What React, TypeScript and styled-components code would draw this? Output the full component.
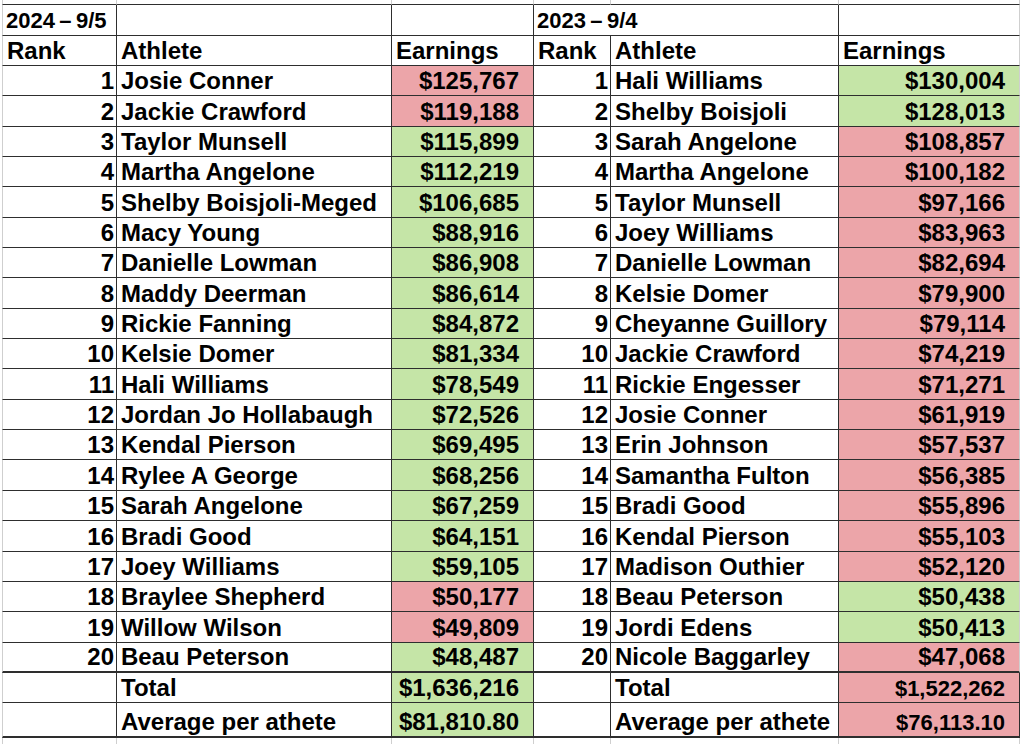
import React from 'react'
import styled, { createGlobalStyle } from 'styled-components'

type Fill = 'red' | 'green' | undefined

interface Entry {
  rank: number
  name: string
  amount: string
  fill: Fill
}

interface Summary {
  label: string
  amount: string
}

const LINE = '#2e2e2e'
const GRID = '#cfcfcf'
const RED = '#eca5a9'
const GREEN = '#c5e5a7'

const GlobalStyle = createGlobalStyle`
  html, body {
    margin: 0;
    padding: 0;
    background: #fff;
  }
  body {
    font-family: "Liberation Sans", Arial, Helvetica, sans-serif;
    font-weight: 700;
    color: #000;
  }
`

const Sheet = styled.div`
  display: grid;
  grid-template-columns: 115px 275px 142px 77px 228px 181px;
  grid-template-rows: 5px 31px 30px repeat(20, 30.35px) 30px 35px 1fr;
  height: 744px;
  padding-left: 2px;
  box-sizing: border-box;
  overflow: hidden;
`

const Cell = styled.div<{ $fill?: Fill; $edge?: boolean; $first?: boolean; $heavy?: boolean }>`
  box-sizing: border-box;
  display: flex;
  align-items: flex-end;
  min-width: 0;
  white-space: nowrap;
  font-size: 24px;
  line-height: normal;
  background: ${({ $fill }) => ($fill === 'red' ? RED : $fill === 'green' ? GREEN : '#fff')};
  border-right: 1px solid ${({ $edge }) => ($edge ? GRID : LINE)};
  border-bottom: ${({ $heavy }) => ($heavy ? 2 : 1)}px solid ${LINE};
  border-left: ${({ $first }) => ($first ? `1px solid ${GRID}` : 'none')};
`

const Gutter = styled.div<{ $first?: boolean; $top?: boolean }>`
  box-sizing: border-box;
  border-right: 1px solid ${GRID};
  border-left: ${({ $first }) => ($first ? `1px solid ${GRID}` : 'none')};
  border-bottom: ${({ $top }) => ($top ? `1px solid ${LINE}` : 'none')};
`

const TitleCell = styled(Cell)<{ $span?: number }>`
  grid-column: span ${({ $span }) => $span ?? 1};
  font-size: 22px;
  word-spacing: -1.7px;
  padding: 0 4px 1px 3px;
`

const HeadCell = styled(Cell)`
  padding: 0 4px 0;
`

const RankCell = styled(Cell)`
  justify-content: flex-end;
  padding-right: 2px;
`

const NameCell = styled(Cell)`
  padding-left: 4px;
`

const MoneyCell = styled(Cell)<{ $small?: boolean }>`
  justify-content: flex-end;
  padding-right: 14px;
  font-size: ${({ $small }) => ($small ? 22 : 24)}px;
`

const left: Entry[] = [
  { rank: 1, name: 'Josie Conner', amount: '$125,767', fill: 'red' },
  { rank: 2, name: 'Jackie Crawford', amount: '$119,188', fill: 'red' },
  { rank: 3, name: 'Taylor Munsell', amount: '$115,899', fill: 'green' },
  { rank: 4, name: 'Martha Angelone', amount: '$112,219', fill: 'green' },
  { rank: 5, name: 'Shelby Boisjoli-Meged', amount: '$106,685', fill: 'green' },
  { rank: 6, name: 'Macy Young', amount: '$88,916', fill: 'green' },
  { rank: 7, name: 'Danielle Lowman', amount: '$86,908', fill: 'green' },
  { rank: 8, name: 'Maddy Deerman', amount: '$86,614', fill: 'green' },
  { rank: 9, name: 'Rickie Fanning', amount: '$84,872', fill: 'green' },
  { rank: 10, name: 'Kelsie Domer', amount: '$81,334', fill: 'green' },
  { rank: 11, name: 'Hali Williams', amount: '$78,549', fill: 'green' },
  { rank: 12, name: 'Jordan Jo Hollabaugh', amount: '$72,526', fill: 'green' },
  { rank: 13, name: 'Kendal Pierson', amount: '$69,495', fill: 'green' },
  { rank: 14, name: 'Rylee A George', amount: '$68,256', fill: 'green' },
  { rank: 15, name: 'Sarah Angelone', amount: '$67,259', fill: 'green' },
  { rank: 16, name: 'Bradi Good', amount: '$64,151', fill: 'green' },
  { rank: 17, name: 'Joey Williams', amount: '$59,105', fill: 'green' },
  { rank: 18, name: 'Braylee Shepherd', amount: '$50,177', fill: 'red' },
  { rank: 19, name: 'Willow Wilson', amount: '$49,809', fill: 'red' },
  { rank: 20, name: 'Beau Peterson', amount: '$48,487', fill: 'green' },
]

const right: Entry[] = [
  { rank: 1, name: 'Hali Williams', amount: '$130,004', fill: 'green' },
  { rank: 2, name: 'Shelby Boisjoli', amount: '$128,013', fill: 'green' },
  { rank: 3, name: 'Sarah Angelone', amount: '$108,857', fill: 'red' },
  { rank: 4, name: 'Martha Angelone', amount: '$100,182', fill: 'red' },
  { rank: 5, name: 'Taylor Munsell', amount: '$97,166', fill: 'red' },
  { rank: 6, name: 'Joey Williams', amount: '$83,963', fill: 'red' },
  { rank: 7, name: 'Danielle Lowman', amount: '$82,694', fill: 'red' },
  { rank: 8, name: 'Kelsie Domer', amount: '$79,900', fill: 'red' },
  { rank: 9, name: 'Cheyanne Guillory', amount: '$79,114', fill: 'red' },
  { rank: 10, name: 'Jackie Crawford', amount: '$74,219', fill: 'red' },
  { rank: 11, name: 'Rickie Engesser', amount: '$71,271', fill: 'red' },
  { rank: 12, name: 'Josie Conner', amount: '$61,919', fill: 'red' },
  { rank: 13, name: 'Erin Johnson', amount: '$57,537', fill: 'red' },
  { rank: 14, name: 'Samantha Fulton', amount: '$56,385', fill: 'red' },
  { rank: 15, name: 'Bradi Good', amount: '$55,896', fill: 'red' },
  { rank: 16, name: 'Kendal Pierson', amount: '$55,103', fill: 'red' },
  { rank: 17, name: 'Madison Outhier', amount: '$52,120', fill: 'red' },
  { rank: 18, name: 'Beau Peterson', amount: '$50,438', fill: 'green' },
  { rank: 19, name: 'Jordi Edens', amount: '$50,413', fill: 'green' },
  { rank: 20, name: 'Nicole Baggarley', amount: '$47,068', fill: 'red' },
]

const leftTotals: Summary[] = [
  { label: 'Total', amount: '$1,636,216' },
  { label: 'Average per athete', amount: '$81,810.80' },
]

const rightTotals: Summary[] = [
  { label: 'Total', amount: '$1,522,262' },
  { label: 'Average per athete', amount: '$76,113.10' },
]

const gutter = (top: boolean) =>
  [0, 1, 2, 3, 4, 5].map((i) => <Gutter key={`g${top}${i}`} $first={i === 0} $top={top} />)

const App: React.FC = () => {
  return (
    <>
      <GlobalStyle />
      <Sheet>
        {gutter(true)}

        <TitleCell $first>2024 – 9/5</TitleCell>
        <TitleCell />
        <TitleCell />
        <TitleCell $span={2}>2023 – 9/4</TitleCell>
        <TitleCell $edge />

        <HeadCell $first>Rank</HeadCell>
        <HeadCell>Athlete</HeadCell>
        <HeadCell>Earnings</HeadCell>
        <HeadCell>Rank</HeadCell>
        <HeadCell>Athlete</HeadCell>
        <HeadCell $edge>Earnings</HeadCell>

        {left.map((l, i) => {
          const r = right[i]
          const heavy = i === left.length - 1
          return (
            <React.Fragment key={l.rank}>
              <RankCell $first $heavy={heavy}>{l.rank}</RankCell>
              <NameCell $heavy={heavy}>{l.name}</NameCell>
              <MoneyCell $fill={l.fill} $heavy={heavy}>{l.amount}</MoneyCell>
              <RankCell $heavy={heavy}>{r.rank}</RankCell>
              <NameCell $heavy={heavy}>{r.name}</NameCell>
              <MoneyCell $fill={r.fill} $heavy={heavy} $edge>{r.amount}</MoneyCell>
            </React.Fragment>
          )
        })}

        {leftTotals.map((t, i) => {
          const heavy = i === leftTotals.length - 1
          const rt = rightTotals[i]
          return (
            <React.Fragment key={t.label}>
              <RankCell $first $heavy={heavy} />
              <NameCell $heavy={heavy}>{t.label}</NameCell>
              <MoneyCell $fill="green" $heavy={heavy}>{t.amount}</MoneyCell>
              <RankCell $heavy={heavy} />
              <NameCell $heavy={heavy}>{rt.label}</NameCell>
              <MoneyCell $fill="red" $heavy={heavy} $small>{rt.amount}</MoneyCell>
            </React.Fragment>
          )
        })}

        {gutter(false)}
      </Sheet>
    </>
  )
}

export default App
